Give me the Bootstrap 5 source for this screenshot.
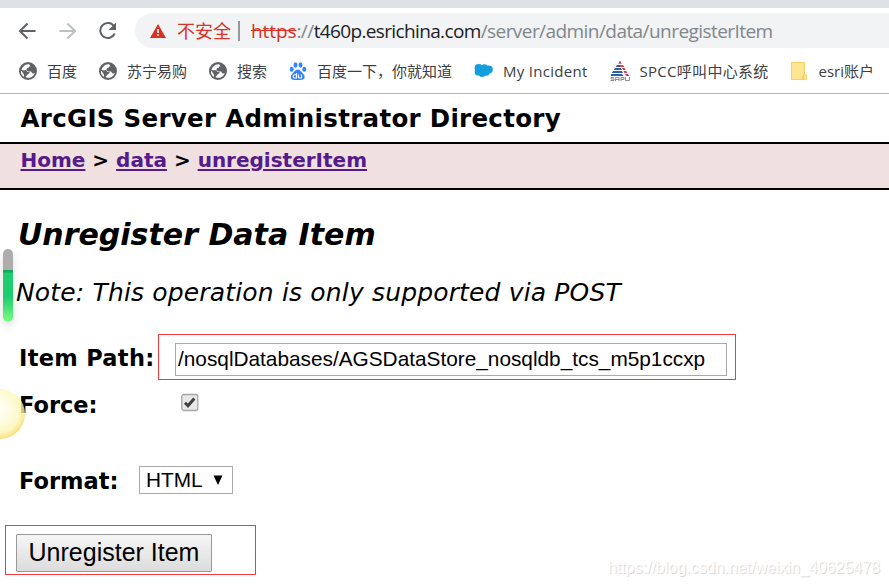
<!DOCTYPE html>
<html lang="zh-CN">
<head>
<meta charset="utf-8">
<title>Unregister Data Item</title>
<link href="https://cdn.jsdelivr.net/npm/bootstrap@5.3.0/dist/css/bootstrap.min.css" rel="stylesheet">
<style>
body{width:889px;height:586px;overflow:hidden;background:#fff;color:#000;font-family:"DejaVu Sans",sans-serif;line-height:1}
.tabstrip{height:8px;background:#dee1e6}
.toolbar{height:45px;padding-left:18px}
.toolbar svg,.bookmarks svg{flex:none;display:block}
.nav-icon{margin-left:22px}
.omni{margin-left:17px;width:770px;height:35px;border-radius:18px 0 0 18px;background:#f1f3f4;padding-left:15px;font:19px "Open Sans","Noto Sans CJK SC",sans-serif;color:#80868b;white-space:nowrap}
.warn{color:#d93025;font:18px "Noto Sans CJK SC",sans-serif;width:54px;margin:-2px 0 0 11px}
.sep{width:2px;height:20px;background:#96999c;margin:0 11px 0 7px}
.addr{letter-spacing:-.56px}
.addr s{color:#d93025;letter-spacing:-.1px}
.host{color:#202124;letter-spacing:-.64px}
.bookmarks{height:41px;border-bottom:1px solid #b6b4b6;font:15px "Open Sans","Noto Sans CJK SC",sans-serif;color:#3c4043;white-space:nowrap;padding:0 0 5px 19px;gap:22px}
.bm{display:flex;align-items:center;gap:10px;flex:none}
.lat{letter-spacing:.28px}
.site{height:50px;border-bottom:2px solid #000;padding:2px 0 0 20.500px;font-weight:700;font-size:24.5px;letter-spacing:.3px}
.crumbs{height:46px;background:#f0e0e0;border-bottom:2px solid #000;padding:6px 0 0 20.500px;font-weight:700;font-size:20px}
.crumbs a{color:#551a8b;text-decoration-thickness:2px;text-underline-offset:2px}
.pagebody{padding-top:28px}
h1{font-size:30px;font-weight:700;font-style:italic;margin:0 0 0 18px;height:60px;line-height:34px;white-space:nowrap}
.note{font-size:25px;letter-spacing:.16px;font-style:italic;margin:0 0 0 16px;height:56px;line-height:30px;white-space:nowrap}
.lbl{font-size:22.5px;font-weight:700;padding:2px 0 0 19px;white-space:nowrap;flex:none}
.lbl-path{width:158px;letter-spacing:.3px}
.lbl-force{width:181px}
.lbl-format{width:139px}
.force-row{height:49px}
.format-row{margin-top:37px;height:28px}
.frame{border:1px solid #f33b3b}
.pathframe{width:578px;height:46px;padding:8px 0 0 16px}
.txt{width:552px;height:33px;border:1px solid #a9a9a9;padding:0 2px 1px;font:20.8px "Liberation Sans",sans-serif;color:#000;outline:0;display:block}
.sel{width:94px;height:28px;border:1px solid #a9a9a9;font:20.8px/26px "Liberation Sans",sans-serif;padding:0 9px 0 6px}
.go{width:196px;height:38px;border:1px solid #999;border-radius:1px;background:linear-gradient(#f6f6f6,#dcdcdc);font:25px/34px "Liberation Sans",sans-serif;color:#000;padding:0 0 2px;white-space:nowrap}
.btnframe{width:251px;height:50px;margin:31px 0 0 5px;padding:8px 0 0 10px}
.gauge{position:absolute;left:3px;top:249px;width:10px;height:73px;border-radius:5px;background:linear-gradient(#adadad 0 21px,#16a65c 21px 23px,#20cc70 24px 48px,#7dfb83);box-shadow:0 4px 9px #0002}
.bubble{position:absolute;left:-25px;top:389px;width:50px;height:50px;border-radius:50%;background:radial-gradient(circle at 45% 40%,#fffef0f0 0 15%,#fcf6b4cc 58%,#f9da68cc 72%)}
.wm{position:absolute;right:9px;bottom:9px;font:16px/18px "Liberation Sans",sans-serif;color:#fff;text-shadow:1px 1px 1px #d4d4d4}
</style>
</head>
<body class="position-relative">
<svg width="0" height="0" class="position-absolute"><defs><symbol id="globe" viewBox="0 0 18 18"><circle cx="9" cy="9" r="9" fill="#5f6368"/><path d="M10 2.200C7.500 2 5.200 3 3.700 5.200L2.300 8l1.900.2 2.600.1c1.200.1 1.500.8 1.500 1.800h2.200c.2 1.300-.5 1.800-1.800 1.900-.2 1.200-.8 1.700-1.900 1.900v1.300c1.500.7 3.200.8 4.800.2 2-.8 3.600-2.400 4.100-4.400-.8.6-1.600.6-2.400.2l-1.200-1.800H9.200C7.900 9 7.500 8.300 7.600 7.200 7.700 6.100 8.500 5.700 9.800 5.700c.2-1 .8-1.400 1.800-1.400z" fill="#fff"/><path d="M2 9v2c.5 1.700 1.500 3 3 4v-2.200L2.500 9z" fill="#fff"/></symbol></defs></svg>
<div class="tabstrip"></div>
<header>
<div class="toolbar d-flex align-items-center">
<svg width="18" height="18" viewBox="0 0 18 18" fill="none" stroke="#5f6368" stroke-width="2"><path d="M17.500 9H2.500M9.500 1.500L2 9l7.500 7.500"/></svg>
<svg class="nav-icon" width="18" height="18" viewBox="0 0 18 18" fill="none" stroke="#bdc0c2" stroke-width="2"><path d="M1.500 9h15M9.500 1.500L17 9l-7.500 7.500"/></svg>
<svg class="nav-icon" width="20" height="18" viewBox="0 0 20 18"><path d="M16 4.300A7.500 7.500 0 1 0 16.700 11.500" fill="none" stroke="#5f6368" stroke-width="2"/><path d="M18 .5V8h-7.500z" fill="#5f6368"/></svg>
<div class="omni d-flex align-items-center">
<svg width="16" height="14" viewBox="0 0 16 14"><path d="M8 0l8 14H0z" fill="#d93025"/><path d="M7.200 5h1.600v4H7.200zm0 5.200h1.600V12H7.200z" fill="#fff"/></svg>
<span class="warn">不安全</span><span class="sep"></span>
<span class="addr"><s>https</s>://<span class="host">t460p.esrichina.com</span>/server/admin/data/unregisterItem</span>
</div></div>
<nav class="bookmarks d-flex align-items-center">
<span class="bm"><svg width="18" height="18"><use href="#globe"/></svg><span>百度</span></span>
<span class="bm"><svg width="18" height="18"><use href="#globe"/></svg><span>苏宁易购</span></span>
<span class="bm"><svg width="18" height="18"><use href="#globe"/></svg><span>搜索</span></span>
<span class="bm"><svg width="18" height="18" viewBox="0 0 17 18" fill="#3385ff"><ellipse cx="2.200" cy="7.300" rx="2" ry="2.500"/><ellipse cx="6" cy="3" rx="2" ry="2.700"/><ellipse cx="11" cy="3" rx="2" ry="2.700"/><ellipse cx="14.800" cy="7.300" rx="2" ry="2.500"/><path d="M8.500 7.500c2 0 3 2 4.500 3.500 4 4 2 7-2 7H5c-4 0-5-3.500-2-6.500C5 9.500 6 7.500 8.500 7.500z"/><path d="M7 11v5H5.200a1.400 1.400 0 0 1 0-3.200H7M9 12.500V15q0 1 1 1h2v-3.500" fill="none" stroke="#fff" stroke-width="1.100"/></svg><span>百度一下，你就知道</span></span>
<span class="bm"><svg width="19" height="15" viewBox="0 0 20 15" fill="#139fdb"><circle cx="5" cy="5" r="4.300"/><circle cx="11" cy="4.500" r="3.700"/><circle cx="15.500" cy="6.500" r="4.300"/><circle cx="4.500" cy="9" r="3.800"/><circle cx="8.500" cy="10.500" r="3.900"/><circle cx="13" cy="9.500" r="3.500"/></svg><span class="lat">My Incident</span></span>
<span class="bm"><svg width="20" height="20" viewBox="0 0 20 20"><path d="M10 0l1.500 2.500h-3zM7 4h4v2H5.800zM5 7h6l1 2H3.800zM3 10h9l1 2H2zM1.500 13H12l1.500 2H.5z" fill="#2f5ca8"/><path d="M10 0l1.500 2.500h-3zM9.500 4H13l1.200 2H10.500zM12 7h2.500l1.200 2H13zM13.500 10h2.800l1.200 2H14.500zM15 13h3l1.300 2H16z" fill="#e13a42"/><path d="M4 16.500H1v1.500h3v1.500H.5M5.500 20v-3.500H9V20M5.500 18.500H9M11 20v-3.500h3v2h-3M15.500 16v3.500h4V16" fill="none" stroke="#8c8c91" stroke-width="1"/></svg><span class="lat">SPCC呼叫中心系统</span></span>
<span class="bm gap-2"><svg width="20" height="18" viewBox="0 0 20 18"><path d="M.5 .5h13v12l2 .5v4.500H.5z" fill="#ffe591" stroke="#f3d266"/><path d="M13.500 12.500L12 14v3.500" stroke="#e8bd3d" fill="none"/></svg><span>esri账户</span></span>
</nav>
</header>
<div class="site d-flex align-items-center"><span>ArcGIS Server Administrator Directory</span></div>
<div class="crumbs"><a href="#">Home</a> &gt; <a href="#">data</a> &gt; <a href="#">unregisterItem</a></div>
<main class="pagebody">
<h1>Unregister Data Item</h1>
<p class="note">Note: This operation is only supported via POST</p>
<form>
<div class="d-flex align-items-center"><label class="lbl lbl-path" for="p">Item Path:</label><div class="frame pathframe"><input class="txt" id="p" value="/nosqlDatabases/AGSDataStore_nosqldb_tcs_m5p1ccxp"></div></div>
<div class="d-flex align-items-center force-row"><span class="lbl lbl-force">Force:</span>
<svg width="18" height="19" viewBox="0 0 18 19" class="mb-1"><rect x=".8" y="1.500" width="16" height="16" rx="2" fill="#e8e8e8" stroke="#a6a6a6" stroke-width="1.300"/><path d="M4 9.800l3 3L13.300 5.500" fill="none" stroke="#404040" stroke-width="3"/></svg></div>
<div class="d-flex align-items-center format-row"><span class="lbl lbl-format">Format:</span><div class="sel d-flex justify-content-between align-items-center"><span>HTML</span><svg width="10" height="10" viewBox="0 0 10 10"><path d="M.5 .5h9L5 10z"/></svg></div></div>
<div class="frame btnframe"><button type="button" class="go">Unregister Item</button></div>
</form>
</main>
<div class="gauge"></div><div class="bubble"></div>
<div class="wm">https://blog.csdn.net/weixin_40625478</div>
<script src="https://cdn.jsdelivr.net/npm/bootstrap@5.3.0/dist/js/bootstrap.bundle.min.js"></script>
</body>
</html>
